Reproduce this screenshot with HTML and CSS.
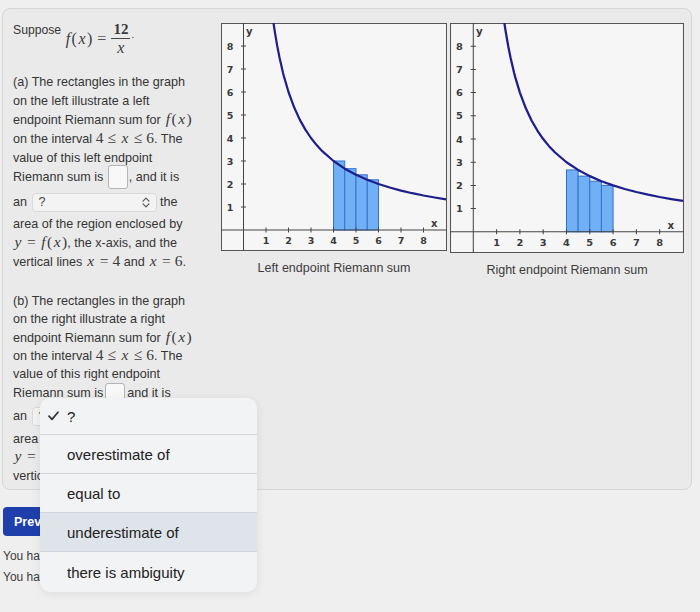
FILE: index.html
```html
<!DOCTYPE html>
<html lang="en">
<head>
<meta charset="utf-8">
<title>Riemann sums</title>
<link rel="stylesheet" href="styles.css">
</head>
<body>
<main class="page">
  <section class="panel">
    <div class="question">
      <p class="intro"><span class="lead">Suppose</span><span class="math"><i>f</i><span class="p">(</span><i>x</i><span class="p">)</span><span class="eq">=</span><span class="frac"><span class="num">12</span><span class="den"><i>x</i></span></span><span class="dot">.</span></span></p>

      <p class="part">(a) The rectangles in the graph<br>
      on the left illustrate a left<br>
      endpoint Riemann sum for <span class="m"><i>f</i>(<i>x</i>)</span><br>
      on the interval <span class="m">4<span class="rel">≤</span><i>x</i><span class="rel">≤</span>6</span>. The<br>
      value of this left endpoint<br>
      Riemann sum is <span class="answer"></span>, and it is<br>
      <span class="selline">an <span class="select"><span class="q">?</span><svg class="chev" viewBox="0 0 8 11" width="8" height="11"><path d="M1 4.2 L4 1.2 L7 4.2 M1 6.8 L4 9.8 L7 6.8"/></svg></span> the</span><br>
      area of the region enclosed by<br>
      <span class="m"><i>y</i><span class="rel">=</span><i>f</i>(<i>x</i>)</span>, the x-axis, and the<br>
      vertical lines <span class="m"><i>x</i><span class="rel">=</span>4</span> and <span class="m"><i>x</i><span class="rel">=</span>6</span>.</p>

      <p class="part partb">(b) The rectangles in the graph<br>
      on the right illustrate a right<br>
      endpoint Riemann sum for <span class="m"><i>f</i>(<i>x</i>)</span><br>
      on the interval <span class="m">4<span class="rel">≤</span><i>x</i><span class="rel">≤</span>6</span>. The<br>
      value of this right endpoint<br>
      Riemann sum is<span class="answer tight"></span>and it is<br>
      <span class="selline">an <span class="select"><span class="q">?</span></span> the</span><br>
      area of the region enclosed by<br>
      <span class="m"><i>y</i><span class="rel">=</span><i>f</i>(<i>x</i>)</span>, the x-axis, and the<br>
      vertical lines <span class="m"><i>x</i><span class="rel">=</span>4</span> and <span class="m"><i>x</i><span class="rel">=</span>6</span>.</p>
    </div>

    <div class="graphs">
      <figure class="graph">
        <svg class="plot plot-left" viewBox="0 0 226 228" preserveAspectRatio="none">
          <rect class="frame" x="0.5" y="0.5" width="225" height="227"/>
          <g class="bars">
            <rect x="112.5" y="138" width="11.25" height="69"/>
            <rect x="123.75" y="145.67" width="11.25" height="61.33"/>
            <rect x="135" y="151.8" width="11.25" height="55.2"/>
            <rect x="146.25" y="156.82" width="11.25" height="50.18"/>
          </g>
          <g class="axes">
            <line x1="22.5" y1="0" x2="22.5" y2="228"/>
            <line x1="0" y1="207" x2="226" y2="207"/>
            <path d="M45 204.5V209.5M67.5 204.5V209.5M90 204.5V209.5M112.5 204.5V209.5M135 204.5V209.5M157.5 204.5V209.5M180 204.5V209.5M202.5 204.5V209.5M20 184H25M20 161H25M20 138H25M20 115H25M20 92H25M20 69H25M20 46H25M20 23H25"/>
          </g>
          <g class="ticks xt">
            <text x="45" y="221">1</text><text x="67.5" y="221">2</text><text x="90" y="221">3</text><text x="112.5" y="221">4</text><text x="135" y="221">5</text><text x="157.5" y="221">6</text><text x="180" y="221">7</text><text x="202.5" y="221">8</text>
          </g>
          <g class="ticks yt">
            <text x="9" y="187.5">1</text><text x="9" y="164.5">2</text><text x="9" y="141.5">3</text><text x="9" y="118.5">4</text><text x="9" y="95.5">5</text><text x="9" y="72.5">6</text><text x="9" y="49.5">7</text><text x="9" y="26.5">8</text>
          </g>
          <text class="axlabel" x="25" y="12">y</text>
          <text class="axlabel" x="210" y="204">x</text>
          <polyline class="curve" points="52.5,0 54,9.86 56.25,23 58.5,34.5 61.88,49.29 63,53.67 67.5,69 73.13,84.33 78.75,96.6 84.38,106.64 90,115 95.63,122.08 101.25,128.14 112.5,138 123.75,145.67 135,151.8 146.25,156.82 157.5,161 168.75,164.54 180,167.57 191.25,170.2 202.5,172.5 213.75,174.53 225,176.33"/>
        </svg>
        <figcaption>Left endpoint Riemann sum</figcaption>
      </figure>

      <figure class="graph">
        <svg class="plot plot-right" viewBox="0 0 226 228" preserveAspectRatio="none">
          <rect class="frame" x="0.5" y="0.5" width="225" height="227"/>
          <g class="bars">
            <rect x="112.5" y="145.67" width="11.25" height="61.33"/>
            <rect x="123.75" y="151.8" width="11.25" height="55.2"/>
            <rect x="135" y="156.82" width="11.25" height="50.18"/>
            <rect x="146.25" y="161" width="11.25" height="46"/>
          </g>
          <g class="axes">
            <line x1="22.5" y1="0" x2="22.5" y2="228"/>
            <line x1="0" y1="207" x2="226" y2="207"/>
            <path d="M45 204.5V209.5M67.5 204.5V209.5M90 204.5V209.5M112.5 204.5V209.5M135 204.5V209.5M157.5 204.5V209.5M180 204.5V209.5M202.5 204.5V209.5M20 184H25M20 161H25M20 138H25M20 115H25M20 92H25M20 69H25M20 46H25M20 23H25"/>
          </g>
          <g class="ticks xt">
            <text x="45" y="221">1</text><text x="67.5" y="221">2</text><text x="90" y="221">3</text><text x="112.5" y="221">4</text><text x="135" y="221">5</text><text x="157.5" y="221">6</text><text x="180" y="221">7</text><text x="202.5" y="221">8</text>
          </g>
          <g class="ticks yt">
            <text x="9" y="187.5">1</text><text x="9" y="164.5">2</text><text x="9" y="141.5">3</text><text x="9" y="118.5">4</text><text x="9" y="95.5">5</text><text x="9" y="72.5">6</text><text x="9" y="49.5">7</text><text x="9" y="26.5">8</text>
          </g>
          <text class="axlabel" x="25" y="12">y</text>
          <text class="axlabel" x="210" y="204">x</text>
          <polyline class="curve" points="52.5,0 54,9.86 56.25,23 58.5,34.5 61.88,49.29 63,53.67 67.5,69 73.13,84.33 78.75,96.6 84.38,106.64 90,115 95.63,122.08 101.25,128.14 112.5,138 123.75,145.67 135,151.8 146.25,156.82 157.5,161 168.75,164.54 180,167.57 191.25,170.2 202.5,172.5 213.75,174.53 225,176.33"/>
        </svg>
        <figcaption>Right endpoint Riemann sum</figcaption>
      </figure>
    </div>
  </section>

  <div class="footer">
    <button class="prev" type="button">Previous</button>
    <p class="note">You have 2 attempts remaining.</p>
    <p class="note">You have used 1 of 3 attempts.</p>
  </div>
</main>

<ul class="popup" role="listbox">
  <li class="opt first"><svg class="check" viewBox="0 0 11 10" width="11" height="10"><path d="M1 5.2 L4 8.4 L10 1.2"/></svg>?</li>
  <li class="opt">overestimate of</li>
  <li class="opt">equal to</li>
  <li class="opt active">underestimate of</li>
  <li class="opt last">there is ambiguity</li>
</ul>
</body>
</html>
```

FILE: styles.css
```css
html, body {
  margin: 0;
  padding: 0;
}

body {
  width: 700px;
  height: 612px;
  overflow: hidden;
  position: relative;
  background: #efefef;
  font-family: "Liberation Sans", Arial, sans-serif;
  color: #353535;
}

.page {
  padding-top: 8px;
}

.panel {
  margin-left: 2px;
  width: 690px;
  height: 482px;
  box-sizing: border-box;
  background: #eaeaea;
  border: 1px solid #d6d6d6;
  border-radius: 8px;
  display: flex;
}

.question {
  width: 208px;
  padding: 12px 0 0 10px;
  font-size: 12.6px;
  line-height: 19px;
}

.intro {
  margin: 0;
  display: flex;
  align-items: flex-start;
}

.lead {
  line-height: 19px;
  font-size: 12.2px;
}

.math {
  display: inline-flex;
  align-items: center;
  margin-left: 3px;
  font-family: "Liberation Serif", "Times New Roman", serif;
  font-size: 16px;
  color: #3a3a3a;
}

.math i {
  padding: 0 1.5px;
}

.math .eq {
  margin: 0 5px;
  color: #555;
}

.frac {
  display: inline-flex;
  flex-direction: column;
  align-items: stretch;
  text-align: center;
}

.frac .num {
  line-height: 16px;
  padding: 0 2px 1px;
  border-bottom: 1px solid #444;
  font-weight: bold;
  font-size: 15px;
}

.frac .den {
  line-height: 17px;
}

.dot {
  align-self: flex-start;
  margin-top: 4px;
  margin-left: 1px;
  font-size: 11px;
}

.part {
  margin: 17px 0 0;
}

.partb {
  margin-top: 20px;
  line-height: 18.3px;
}

.m {
  font-family: "Liberation Serif", "Times New Roman", serif;
  font-size: 15.5px;
  line-height: 12px;
  color: #3a3a3a;
}

.m i {
  padding: 0 1.5px;
}

.rel {
  margin: 0 4px;
}

.answer {
  display: inline-block;
  width: 18px;
  height: 22px;
  margin: -4px 1px -3px 1px;
  vertical-align: middle;
  background: #f8f8f8;
  border: 1px solid #b4b4b4;
  border-radius: 3px;
}

.answer.tight {
  margin: -3px 2px -6px 2px;
}

.selline {
  display: inline-block;
  margin: 6px 0 3px;
}

.partb .selline {
  margin: 5px 0 4px;
}

.select {
  display: inline-flex;
  align-items: center;
  justify-content: space-between;
  box-sizing: border-box;
  width: 125px;
  height: 19px;
  margin-left: 1px;
  padding: 0 6px 0 6px;
  vertical-align: middle;
  background: #f3f3f3;
  border: 1px solid #d9d9d9;
  border-radius: 4px;
  color: #444;
}

.chev {
  display: block;
  fill: none;
  stroke: #555;
  stroke-width: 1.2;
  stroke-linecap: round;
  stroke-linejoin: round;
}

.graphs {
  display: flex;
  gap: 3px;
  padding-top: 14px;
}

.graph {
  margin: 0;
}

.plot {
  display: block;
}

.plot-left {
  width: 226px;
  height: 228px;
}

.plot-right {
  width: 234px;
  height: 230px;
}

.frame {
  fill: #f6f6f6;
  stroke: #555;
  stroke-width: 1;
}

.bars rect {
  fill: #72b0f5;
  stroke: #3472d2;
  stroke-width: 1;
}

.axes line,
.axes path {
  stroke: #444;
  stroke-width: 1;
  fill: none;
}

.ticks text {
  font-family: "DejaVu Sans", Verdana, sans-serif;
  font-weight: bold;
  font-size: 9.5px;
  fill: #3a3a3a;
  text-anchor: middle;
}

.axlabel {
  font-family: "DejaVu Sans", Verdana, sans-serif;
  font-weight: bold;
  font-size: 10px;
  fill: #3a3a3a;
}

.curve {
  fill: none;
  stroke: #1d1f8c;
  stroke-width: 2.2;
  stroke-linejoin: round;
}

figcaption {
  margin-top: 9px;
  text-align: center;
  font-size: 12.5px;
  line-height: 16px;
  color: #3c3c3c;
}

.footer {
  padding: 17px 0 0 3px;
}

.prev {
  display: block;
  width: 82px;
  height: 29px;
  padding: 0 0 0 11px;
  text-align: left;
  border: none;
  border-radius: 4px;
  background: #1f3fac;
  color: #ffffff;
  font-family: "Liberation Sans", Arial, sans-serif;
  font-weight: bold;
  font-size: 12.5px;
}

.note {
  margin: 0;
  font-size: 12px;
  line-height: 21px;
  color: #3a3a3a;
}

.prev + .note {
  margin-top: 10px;
}

.popup {
  position: absolute;
  left: 40px;
  top: 398px;
  width: 217px;
  margin: 0;
  padding: 0;
  list-style: none;
  background: #f2f3f5;
  border-radius: 10px;
  overflow: hidden;
  box-shadow: 0 2px 10px rgba(0, 0, 0, 0.08);
  font-family: "Liberation Sans", Arial, sans-serif;
  font-size: 15px;
  color: #222;
}

.opt {
  height: 38px;
  display: flex;
  align-items: center;
  padding-left: 27px;
  border-top: 1px solid #d3d6da;
}

.opt.first {
  height: 36px;
  border-top: none;
  position: relative;
}

.opt.last {
  height: 40px;
}

.opt.active {
  background: #dfe4eb;
}

.check {
  position: absolute;
  left: 8px;
  top: 13px;
  fill: none;
  stroke: #333;
  stroke-width: 1.7;
  stroke-linecap: round;
  stroke-linejoin: round;
}
```
